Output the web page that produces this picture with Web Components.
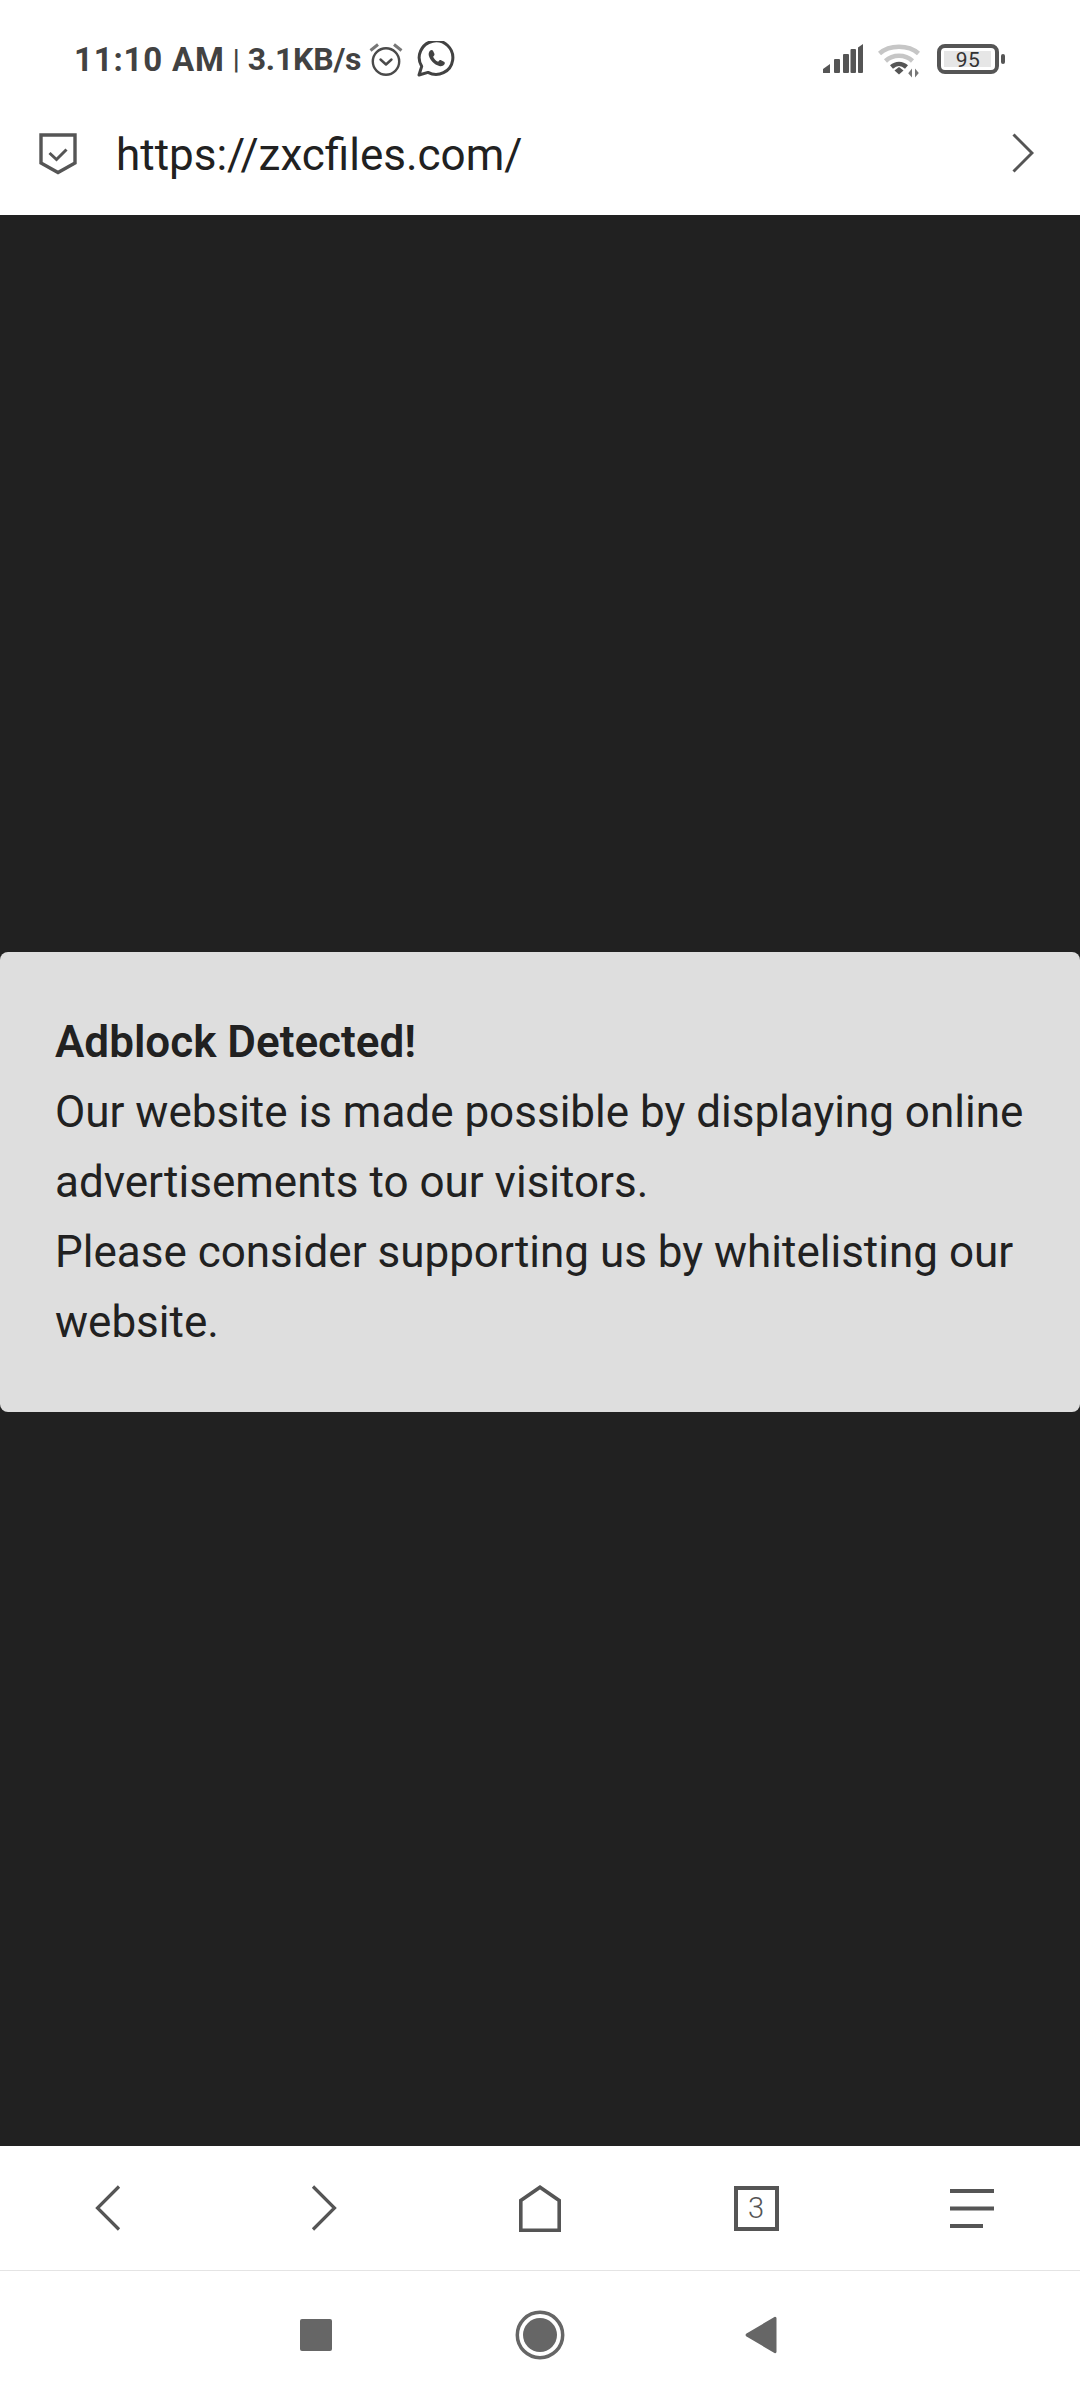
<!DOCTYPE html>
<html lang="en">
<head>
<meta charset="utf-8">
<title>zxcfiles</title>
<style>
  html, body { margin: 0; padding: 0; background: #fff; }
  body { font-family: Roboto, "Liberation Sans", sans-serif; }
</style>
</head>
<body>
<phone-screen>
  <status-bar slot="top"></status-bar>
  <url-bar slot="top" url="https://zxcfiles.com/"></url-bar>
  <adblock-notice>
    <strong slot="title">Adblock Detected!</strong>
    Our website is made possible by displaying online advertisements to our visitors.<br>
    Please consider supporting us by whitelisting our website.
  </adblock-notice>
  <browser-toolbar slot="bottom" tabs="3"></browser-toolbar>
  <nav-keys slot="bottom"></nav-keys>
</phone-screen>

<script>
class PhoneScreen extends HTMLElement {
  constructor() {
    super();
    this.attachShadow({ mode: "open" });
    this.shadowRoot.innerHTML = `
      <style>
        :host { display: flex; flex-direction: column; width: 1080px; height: 2400px; overflow: hidden; background: #fff; }
        main { flex: 1; display: flex; align-items: center; padding-top: 3px; background: #212121; }
      </style>
      <slot name="top"></slot>
      <main><slot></slot></main>
      <slot name="bottom"></slot>
    `;
  }
}

class StatusBar extends HTMLElement {
  constructor() {
    super();
    this.attachShadow({ mode: "open" });
    this.shadowRoot.innerHTML = `
      <style>
        :host { display: flex; align-items: flex-start; height: 95px; box-sizing: border-box; padding: 41px 75px 0 74px; color: #424242; }
        .time { font-size: 33px; font-weight: 700; line-height: 37px; letter-spacing: 0.8px; white-space: nowrap; }
        .sep { font-size: 28px; font-weight: 500; line-height: 37px; margin: 0 8px; }
        .speed { font-size: 32px; font-weight: 700; line-height: 37px; white-space: nowrap; letter-spacing: -0.2px; }
        svg { display: block; flex: none; }
        .alarm { margin: 1px 0 0 8px; }
        .wa { margin: 0 0 0 14px; }
        .gap { flex: 1; }
        .signal { margin-top: 3px; }
        .wifi { margin: 3px 0 0 15px; }
        .batt { margin: 3px 0 0 15px; }
      </style>
      <span class="time">11:10 AM</span><span class="sep">|</span><span class="speed">3.1KB/s</span>
      <svg class="alarm" width="34" height="34" viewBox="0 0 34 34" fill="none" stroke="#4a4a4a">
        <circle cx="17" cy="19.5" r="13.2" stroke-width="2.4"/>
        <path d="M11.5 17.5l5.500 5 5.500-5" stroke-width="2.4" stroke-linecap="round" stroke-linejoin="round"/>
        <path d="M1.500 8.500L9 2.500M32.500 8.500L25 2.500" stroke-width="3" stroke="#777"/>
      </svg>
      <svg class="wa" width="38" height="36" viewBox="0 0 38 36" fill="none">
        <path d="M2 34l2.700-8.600A16.800 16.800 0 1 1 11 31.400z" stroke="#424242" stroke-width="3" stroke-linejoin="round"/>
        <path d="M13.200 9.500c1-.9 2.300-.8 2.800.3l1.400 3c.3.700.1 1.300-.4 1.900l-.9 1c1 2.200 2.700 4 5 5.100l1.200-1.300c.5-.5 1.100-.6 1.800-.3l2.900 1.500c1 .5 1.100 1.800.3 2.800-1.200 1.500-3 2.100-5 1.500-5.200-1.500-9.200-5.500-10.500-10.500-.5-1.900.2-3.800 1.400-5z" fill="#424242"/>
      </svg>
      <span class="gap"></span>
      <svg class="signal" width="41" height="29" viewBox="0 0 41 29" fill="#555">
        <path d="M1 28.500v-3.500l7-5v8.500a.5.5 0 0 1-.5.5h-6a.5.5 0 0 1-.5-.5z"/>
        <rect x="12" y="15" width="6" height="14" rx="1"/>
        <rect x="21" y="10" width="6" height="19" rx="1"/>
        <rect x="28.500" y="5" width="5.500" height="24" rx="1"/>
        <path d="M36 3.500L41 0v28a1 1 0 0 1-1 1h-3a1 1 0 0 1-1-1z"/>
      </svg>
      <svg class="wifi" width="44" height="34" viewBox="0 0 44 34" fill="none">
        <path d="M1.500 9.500C11.500.5 30.500.5 40.500 9.500" stroke="#c6c6c6" stroke-width="4.500"/>
        <path d="M7.500 17C15 10 27 10 34.500 17" stroke="#c6c6c6" stroke-width="4.500"/>
        <path d="M13.500 23c4.500-4 10.500-4 15 0" stroke="#555" stroke-width="4.500"/>
        <path d="M16.500 26.500l4.500-3.500 4.500 3.500-4.500 4z" fill="#555"/>
        <path d="M34 24.500v9l-3.800-4.200zM37 24.500v9l3.800-4.500z" fill="#777"/>
      </svg>
      <svg class="batt" width="68" height="30" viewBox="0 0 68 30">
        <rect x="2" y="2" width="58" height="26" rx="6" fill="#fff" stroke="#555" stroke-width="4"/>
        <rect x="7" y="7" width="47" height="16" fill="#e6e6e6"/>
        <rect x="64" y="10" width="4" height="10" rx="2" fill="#555"/>
        <text x="31" y="22.500" font-family="Roboto, sans-serif" font-size="21" fill="#333" text-anchor="middle" letter-spacing="0.5">95</text>
      </svg>
    `;
  }
}

class UrlBar extends HTMLElement {
  constructor() {
    super();
    this.attachShadow({ mode: "open" });
    this.shadowRoot.innerHTML = `
      <style>
        :host { display: flex; align-items: center; height: 120px; box-sizing: border-box; padding: 0 46px 0 39px; color: #212121; }
        svg { display: block; flex: none; }
        .url { flex: 1; margin-left: 39px; font-size: 44px; line-height: 52px; white-space: nowrap; }
        .shield { margin-top: -3px; }
        .go { margin-top: -4px; }
      </style>
      <svg class="shield" width="38" height="42" viewBox="0 0 38 42" fill="none" stroke="#555">
        <path d="M2 2h34v28L19 39.500 2 30z" stroke-width="3.400"/>
        <path d="M10.500 20l7 6.500 10-10" stroke-width="3"/>
      </svg>
      <span class="url"></span>
      <svg class="go" width="22" height="40" viewBox="0 0 22 40" fill="none" stroke="#555" stroke-width="3">
        <path d="M1.500 1.500L20 20 1.500 38.500"/>
      </svg>
    `;
    this.shadowRoot.querySelector(".url").textContent = this.getAttribute("url") || "";
  }
}

class AdblockNotice extends HTMLElement {
  constructor() {
    super();
    this.attachShadow({ mode: "open" });
    this.shadowRoot.innerHTML = `
      <style>
        :host { display: block; width: 100%; box-sizing: border-box; padding: 55px 20px 55px 55px; background: #dedede; border-radius: 8px; color: #212121; font-size: 44px; line-height: 70px; }
        .title { display: block; }
        ::slotted(strong) { font-weight: 600; }
      </style>
      <span class="title"><slot name="title"></slot></span>
      <slot></slot>
    `;
  }
}

class BrowserToolbar extends HTMLElement {
  constructor() {
    super();
    this.attachShadow({ mode: "open" });
    this.shadowRoot.innerHTML = `
      <style>
        :host { display: grid; grid-template-columns: repeat(5, 216px); height: 124px; box-sizing: border-box; }
        div { display: flex; align-items: center; justify-content: center; }
        svg { display: block; }
        .tabs { box-sizing: border-box; width: 45px; height: 45px; border: 4px solid #555; display: flex; align-items: center; justify-content: center; font-size: 29px; font-weight: 300; color: #555; }
      </style>
      <div><svg width="26" height="46" viewBox="0 0 26 46" fill="none" stroke="#555" stroke-width="3.200"><path d="M24 1.500L2.500 23 24 44.500"/></svg></div>
      <div><svg width="26" height="46" viewBox="0 0 26 46" fill="none" stroke="#555" stroke-width="3.200"><path d="M2 1.500L23.500 23 2 44.500"/></svg></div>
      <div><svg width="42" height="47" viewBox="0 0 42 47" fill="none" stroke="#555" stroke-width="3.600"><path d="M1.800 45.200V15.500L21 2.200 40.200 15.500v29.700z"/></svg></div>
      <div><span class="tabs"></span></div>
      <div><svg width="44" height="40" viewBox="0 0 44 40" fill="#555"><rect y="1" width="44" height="4"/><rect y="18.500" width="44" height="4"/><rect y="36" width="33" height="4"/></svg></div>
    `;
    this.shadowRoot.querySelector(".tabs").textContent = this.getAttribute("tabs") || "";
  }
}

class NavKeys extends HTMLElement {
  constructor() {
    super();
    this.attachShadow({ mode: "open" });
    this.shadowRoot.innerHTML = `
      <style>
        :host { display: flex; justify-content: center; align-items: center; height: 130px; box-sizing: border-box; border-top: 1px solid #e4e4e4; padding-bottom: 1px; }
        div { width: 224px; display: flex; justify-content: center; }
        .back { box-sizing: border-box; padding-right: 6px; }
        svg { display: block; }
      </style>
      <div><svg width="32" height="32" viewBox="0 0 32 32"><rect width="32" height="32" rx="2" fill="#666"/></svg></div>
      <div><svg width="50" height="50" viewBox="0 0 50 50"><circle cx="25" cy="25" r="22.700" fill="none" stroke="#666" stroke-width="3.500"/><circle cx="25" cy="25" r="17" fill="#666"/></svg></div>
      <div class="back"><svg width="32" height="38" viewBox="0 0 32 38"><path d="M1.500 17.500L29 1.200a1.500 1.500 0 0 1 2.500 1.300v33a1.500 1.500 0 0 1-2.500 1.300L1.500 20.500a1.700 1.700 0 0 1 0-3z" fill="#666"/></svg></div>
    `;
  }
}

customElements.define("phone-screen", PhoneScreen);
customElements.define("status-bar", StatusBar);
customElements.define("url-bar", UrlBar);
customElements.define("adblock-notice", AdblockNotice);
customElements.define("browser-toolbar", BrowserToolbar);
customElements.define("nav-keys", NavKeys);
</script>
</body>
</html>
